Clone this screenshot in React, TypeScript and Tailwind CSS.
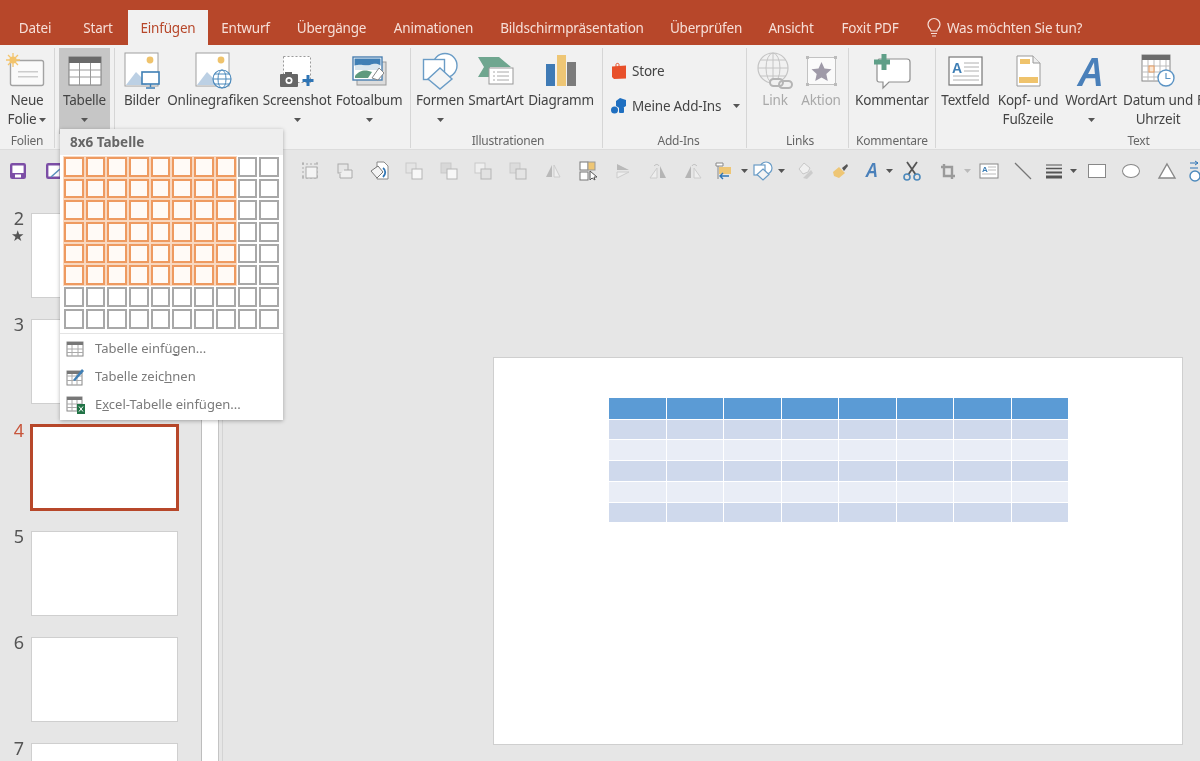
import type { ReactNode } from 'react'

const TABS = [
  { label: 'Datei', w: 'w-[66px]' },
  { label: 'Start', w: 'w-[60px]' },
  { label: 'Einfügen', w: 'w-[80px]', active: true },
  { label: 'Entwurf', w: 'w-[75px]' },
  { label: 'Übergänge', w: 'w-[97px]' },
  { label: 'Animationen', w: 'w-[107px]' },
  { label: 'Bildschirmpräsentation', w: 'w-[170px]' },
  { label: 'Überprüfen', w: 'w-[98px]' },
  { label: 'Ansicht', w: 'w-[72px]' },
  { label: 'Foxit PDF', w: 'w-[86px]' },
]

const Caret = ({ light }: { light?: boolean }) => (
  <svg width="7" height="4" viewBox="0 0 7 4" className="shrink-0">
    <path d="M0 0h7L3.5 4z" fill={light ? '#bbb' : '#555'} />
  </svg>
)

function Icon({ w, h, children }: { w: number; h: number; children: ReactNode }) {
  return (
    <svg width={w} height={h} viewBox={`0 0 ${w} ${h}`} className="shrink-0 overflow-visible">
      {children}
    </svg>
  )
}

/* ---------- ribbon icons ---------- */
const NewSlideIcon = () => (
  <Icon w={38} h={34}>
    <rect x="2.5" y="6.5" width="33" height="25" rx="2" fill="#fafafa" stroke="#a3a3a3" strokeWidth="1.4" />
    <rect x="10" y="17" width="20" height="1.5" fill="#ccc" />
    <rect x="10" y="22" width="20" height="1.5" fill="#ccc" />
    <circle cx="5" cy="6" r="3.6" fill="#f3c46c" />
    <path d="M5 -1v14M-2 6h14M0 1l10 10M10 1L0 11" stroke="#f3c46c" strokeWidth="1.300" />
  </Icon>
)

const TableIcon = () => (
  <Icon w={34} h={30}>
    <rect x="1" y="1" width="32" height="28" fill="#fff" stroke="#7a7a7a" />
    <rect x="1" y="1" width="32" height="6" fill="#6a6a6a" />
    <path d="M1 14h32M1 21h32M11.500 7v22M22.500 7v22" stroke="#9a9a9a" />
  </Icon>
)

const PictureFrame = () => (
  <>
    <rect x="1" y="1" width="33" height="33" fill="#fff" stroke="#a0a0a0" />
    <circle cx="26" cy="8" r="3.400" fill="#efc36c" />
    <path d="M2 33l10-13 8 8 3 5z" fill="#bcd0e4" />
  </>
)

const PicturesIcon = () => (
  <Icon w={36} h={37}>
    <PictureFrame />
    <rect x="18" y="20" width="17" height="12" fill="#fff" stroke="#3f7fb5" strokeWidth="1.6" />
    <path d="M26.500 32v3M22 36h9" stroke="#3f7fb5" strokeWidth="1.400" />
  </Icon>
)

const OnlineIcon = () => (
  <Icon w={37} h={37}>
    <PictureFrame />
    <circle cx="27" cy="27" r="9" fill="#fff" stroke="#4d8abc" strokeWidth="1.200" />
    <ellipse cx="27" cy="27" rx="4" ry="9" fill="none" stroke="#4d8abc" />
    <path d="M18 27h18M19.500 22h15M19.500 32h15" stroke="#4d8abc" />
  </Icon>
)

const ScreenshotIcon = () => (
  <Icon w={34} h={32}>
    <rect x="3.500" y="1.500" width="27" height="26" fill="#fff" stroke="#9a9a9a" strokeDasharray="2 2" />
    <rect x="0" y="19" width="18" height="13" rx="1" fill="#666" />
    <rect x="5" y="17" width="7" height="3" fill="#666" />
    <circle cx="9" cy="25.500" r="3.500" fill="#fff" />
    <circle cx="9" cy="25.500" r="1.800" fill="#666" />
    <path d="M28 20v11M22.500 25.500h11" stroke="#2f75b5" strokeWidth="3" />
  </Icon>
)

const AlbumIcon = () => (
  <Icon w={35} h={30}>
    <rect x="5" y="6" width="29" height="23" fill="#dcdcdc" stroke="#999" />
    <rect x="1" y="1" width="29" height="23" fill="#fff" stroke="#4a7fb0" strokeWidth="1.400" />
    <rect x="2.500" y="2.500" width="26" height="7" fill="#3f7fb5" />
    <path d="M3 10c6-3 10 1 15-1s7-1 10 0v5H3z" fill="#d9e6ee" />
    <path d="M3 20c5-7 12-6 17-4l-4 6H3z" fill="#5f9a7e" />
    <path d="M20 22l7-10 5 5-6 7z" fill="#fff" stroke="#888" />
  </Icon>
)

const ShapesIcon = () => (
  <Icon w={37} h={37}>
    <circle cx="23" cy="13.500" r="12" fill="#fff" stroke="#6a9cc6" strokeWidth="1.400" />
    <rect x="1.500" y="7.500" width="21" height="20" fill="#fff" stroke="#6a9cc6" strokeWidth="1.400" />
    <path d="M18 16l12 11-12 10-12-10z" fill="#f4f4f4" stroke="#6a9cc6" strokeWidth="1.400" />
  </Icon>
)

const SmartArtIcon = () => (
  <Icon w={36} h={29}>
    <path d="M0 1h21l12 10H12v10H0l6-10z" fill="#6fa68f" />
    <rect x="11" y="12" width="24" height="16" fill="#fff" stroke="#999" />
    <path d="M15 16h2M19 16h12M15 20h2M19 20h12M15 24h2M19 24h12" stroke="#aaa" />
  </Icon>
)

const ChartIcon = () => (
  <Icon w={30} h={32}>
    <rect x="0" y="9" width="9" height="22" fill="#3f7ab5" />
    <rect x="11" y="0" width="9" height="31" fill="#eec675" />
    <rect x="21" y="7" width="9" height="24" fill="#7b7b7b" />
  </Icon>
)

const StoreIcon = () => (
  <Icon w={16} h={18}>
    <path d="M5 5V2.500C5 1 8 1 8 2.500V5" fill="none" stroke="#e8502a" strokeWidth="1" />
    <path d="M1 4.500l14-1v13L3 17l-2-2z" fill="#e8502a" />
  </Icon>
)

const AddInsIcon = () => (
  <Icon w={16} h={16}>
    <path d="M9 0l6 2v6l-5 3-5-3V3z" fill="#1f6fc0" />
    <circle cx="3.500" cy="12" r="3.500" fill="#1f6fc0" />
    <rect x="8" y="9" width="5" height="6" rx="1" fill="#1f6fc0" />
  </Icon>
)

const LinkIcon = () => (
  <Icon w={36} h={38}>
    <circle cx="16" cy="16" r="15" fill="none" stroke="#c4c4c4" strokeWidth="1.200" />
    <ellipse cx="16" cy="16" rx="7" ry="15" fill="none" stroke="#c4c4c4" />
    <path d="M1 16h30M3 8h26M3 24h26M16 1v30" stroke="#c4c4c4" />
    <rect x="13" y="27" width="13" height="7" rx="3.500" fill="#f1f1f1" stroke="#b5b5b5" strokeWidth="2" />
    <rect x="22" y="29" width="13" height="7" rx="3.500" fill="none" stroke="#b5b5b5" strokeWidth="2" />
  </Icon>
)

const ActionIcon = () => (
  <Icon w={31} h={30}>
    <rect x="1.500" y="1.500" width="28" height="27" fill="#fafafa" stroke="#c2c2c2" />
    <path d="M0 0h3v3H0zM28 0h3v3h-3zM0 27h3v3H0zM28 27h3v3h-3z" fill="#bbb" />
    <path d="M15.500 6l3 6.500 7 .8-5.200 4.700 1.500 7-6.300-3.600-6.300 3.600 1.500-7-5.200-4.700 7-.8z" fill="#9f9aa8" />
  </Icon>
)

const CommentIcon = () => (
  <Icon w={37} h={34}>
    <path d="M5 5h28a3 3 0 0 1 3 3v17a3 3 0 0 1-3 3H15l-6 6v-6H5a2 2 0 0 1-2-2V8z" fill="#fff" stroke="#8f8f8f" strokeWidth="1.200" />
    <path d="M10 0v16M0 8h16" stroke="#5f9f88" strokeWidth="5" />
  </Icon>
)

const TextBoxIcon = () => (
  <Icon w={35} h={30}>
    <rect x="1" y="1" width="33" height="28" fill="#fff" stroke="#777" strokeWidth="1.200" />
    <text x="4" y="17" fontSize="14" fontWeight="700" fontFamily="Liberation Sans, sans-serif" fill="#3f7fb5">A</text>
    <path d="M16 7h15M16 11h15M16 15h15M5 20h26M5 24h26" stroke="#b0b0b0" />
  </Icon>
)

const HeaderIcon = () => (
  <Icon w={25} h={32}>
    <path d="M1 1h16l7 7v23H1z" fill="#fff" stroke="#999" />
    <path d="M17 1v7h7" fill="#eee" stroke="#999" />
    <rect x="4" y="4" width="10" height="5" fill="#efc36c" />
    <rect x="3" y="22" width="19" height="6" fill="#efc36c" />
  </Icon>
)

const CalendarIcon = () => (
  <Icon w={35} h={33}>
    <rect x="1" y="1" width="28" height="26" fill="#fff" stroke="#888" />
    <rect x="1" y="1" width="28" height="5" fill="#6b6b6b" />
    <path d="M1 12h28M1 18h28M1 23h28M7 6v21M13 6v21M19 6v21M25 6v21" stroke="#bbb" />
    <rect x="8" y="12" width="5" height="6" fill="#fbe7d4" stroke="#e59a5f" />
    <circle cx="25" cy="24" r="8" fill="#fff" stroke="#5a93c4" strokeWidth="1.400" />
    <path d="M25 19v5.500h4.500" fill="none" stroke="#5a93c4" strokeWidth="1.200" />
  </Icon>
)

/* ---------- toolbar icons (20x20) ---------- */
const T = ({ children }: { children: ReactNode }) => <Icon w={20} h={20}>{children}</Icon>

const SaveIcon = () => (
  <T>
    <rect x="3.200" y="3.200" width="13.600" height="13.600" rx="1" fill="#fff" stroke="#7c4ea6" strokeWidth="2.400" />
    <path d="M3 12h14v5H3z" fill="#7c4ea6" />
    <rect x="7" y="13.500" width="6" height="3" fill="#fff" />
  </T>
)
const SaveAsIcon = () => (
  <T>
    <rect x="3.200" y="3.200" width="13.600" height="13.600" rx="1" fill="#fff" stroke="#7c4ea6" strokeWidth="2.400" />
    <path d="M7 16l9-8" stroke="#5a8fbd" strokeWidth="1.500" />
  </T>
)
const GroupIcon = () => (
  <T>
    <path d="M2 2h2M16 2h2M2 16h2M16 16h2M3 2v16M17 2v16M2 3h16M2 17h16" stroke="#aaa" strokeDasharray="2 2" />
    <rect x="6" y="6" width="11" height="11" fill="#f4f4f4" stroke="#aaa" />
  </T>
)
const UngroupIcon = () => (
  <T>
    <rect x="3" y="3" width="10" height="9" fill="none" stroke="#aaa" />
    <path d="M9 9h8v8H5v-4" fill="#f0f0f0" stroke="#aaa" />
  </T>
)
const TagIcon = () => (
  <T>
    <path d="M7 1h7l4 4v13H7z" fill="#fff" stroke="#888" />
    <path d="M1 10l7-5 5 6-6 6z" fill="#f4f4f4" stroke="#777" />
    <path d="M13 7c3 2 3 6 0 9" stroke="#2f75b5" strokeWidth="1.800" fill="none" />
  </T>
)
const Layer = ({ a, b }: { a: string; b: string }) => (
  <T>
    <rect x="2" y="2" width="10" height="10" fill={a} stroke="#c9c9c9" />
    <rect x="8" y="8" width="10" height="10" fill={b} stroke="#b5b5b5" />
  </T>
)
const FlipIcon = ({ flip }: { flip?: boolean }) => (
  <T>
    <g transform={flip ? 'rotate(90 10 10)' : undefined}>
      <path d="M9 4v12H3z" fill="#b9b9b9" />
      <path d="M11 4v12h6z" fill="#eee" stroke="#ccc" />
    </g>
  </T>
)
const RotateIcon = ({ mirror }: { mirror?: boolean }) => (
  <T>
    <g transform={mirror ? 'translate(20 0) scale(-1 1)' : undefined}>
      <path d="M12 5v12h6z" fill="#b5b5b5" />
      <path d="M2 17l7-10v10z" fill="#eee" stroke="#ccc" />
      <path d="M6 5c2-2 4-2 5 0" stroke="#bbb" fill="none" />
    </g>
  </T>
)
const SelectIcon = () => (
  <T>
    <rect x="2" y="1" width="8" height="8" fill="#fff" stroke="#777" />
    <rect x="10" y="1" width="7" height="8" fill="#eec675" stroke="#999" />
    <rect x="2" y="11" width="8" height="8" fill="#fff" stroke="#777" />
    <path d="M12 10v9l2-2 3 2-1-3h3z" fill="#fff" stroke="#555" />
  </T>
)
const ArrangeIcon = () => (
  <T>
    <path d="M3 2h7v3h-7zM5 5v13" fill="#fff" stroke="#888" />
    <rect x="6" y="6" width="12" height="7" fill="#eec675" />
    <path d="M16 15H7M10 12l-3 3 3 3" stroke="#2f75b5" strokeWidth="1.400" fill="none" />
  </T>
)
const SmallShapes = () => (
  <T>
    <circle cx="13" cy="7" r="6" fill="#fff" stroke="#6a9cc6" strokeWidth="1.200" />
    <rect x="1" y="4" width="11" height="10" fill="#fff" stroke="#6a9cc6" strokeWidth="1.200" />
    <path d="M10 8l6 5.500-6 5.500-6-5.500z" fill="#f4f4f4" stroke="#6a9cc6" strokeWidth="1.200" />
  </T>
)
const FadedIcon = () => (
  <T>
    <path d="M4 8l5-6 6 5-2 4-5 2z" fill="#f0f0f0" stroke="#c8c8c8" />
    <path d="M8 17l8-8 2 3-6 6z" fill="#ccc" />
  </T>
)
const BrushIcon = () => (
  <T>
    <path d="M3 11l6-5 6 6-6 5-5-2z" fill="#eec675" />
    <path d="M12 7l5-4 1 2-4 5z" fill="#555" />
  </T>
)
const ScissorsIcon = () => (
  <T>
    <path d="M5 1l9 13M15 1L6 14" stroke="#555" strokeWidth="1.800" />
    <circle cx="5" cy="16" r="3" fill="none" stroke="#4d8abc" strokeWidth="1.600" />
    <circle cx="15" cy="16" r="3" fill="none" stroke="#4d8abc" strokeWidth="1.600" />
  </T>
)
const CropIcon = () => (
  <T>
    <path d="M6 3v12h11M3 6h11v12" fill="none" stroke="#9a9a9a" strokeWidth="2.400" />
  </T>
)
const SmallTextBox = () => (
  <T>
    <rect x="1" y="3" width="18" height="14" fill="#fff" stroke="#888" />
    <text x="3" y="11" fontSize="8" fontWeight="700" fontFamily="Liberation Sans, sans-serif" fill="#3f7fb5">A</text>
    <path d="M9 6h8M9 9h8M3 13h14" stroke="#bbb" />
  </T>
)
const LineIcon = () => (
  <T>
    <path d="M2 2l16 16" stroke="#777" strokeWidth="1.300" />
  </T>
)
const LinesIcon = () => (
  <T>
    <path d="M2 4h16" stroke="#555" />
    <path d="M2 7.500h16" stroke="#555" strokeWidth="1.500" />
    <path d="M2 11.500h16" stroke="#555" strokeWidth="2" />
    <path d="M2 16h16" stroke="#555" strokeWidth="3" />
  </T>
)
const ConnectorIcon = () => (
  <T>
    <path d="M5 2h8M10 0l3 2-3 2M5 7h8" stroke="#2f75b5" fill="none" />
    <circle cx="10" cy="15" r="5" fill="#fff" stroke="#4d8abc" strokeWidth="1.400" />
  </T>
)

const A = ({ big }: { big?: boolean }) => (
  <span
    className={`italic font-semibold text-[#4a80ba] ${big ? 'text-[40px] leading-[38px]' : 'text-[19px] leading-[20px]'}`}
  >
    A
  </span>
)

/* ---------- ribbon parts ---------- */
function RibbonBtn({
  className,
  icon,
  lines,
  caret,
  muted,
}: {
  className: string
  icon: ReactNode
  lines: string[]
  caret?: boolean
  muted?: boolean
}) {
  return (
    <div className={`flex shrink-0 flex-col items-center ${className}`}>
      <div className="flex h-[43px] w-full items-center justify-center pt-[2px]">{icon}</div>
      {lines.map((l) => (
        <div key={l} className={`h-[19px] whitespace-nowrap text-center leading-[19px] ${muted ? 'text-[#a9a9a9]' : ''}`}>
          {l}
        </div>
      ))}
      {caret && (
        <div className="flex h-[19px] items-center">
          <Caret />
        </div>
      )}
    </div>
  )
}

function Group({ className, label, children }: { className: string; label?: string; children: ReactNode }) {
  return (
    <div className={`relative flex h-[100px] shrink-0 flex-col border-r border-[#d6d6d6] ${className}`}>
      <div className="flex h-[86px] overflow-hidden">{children}</div>
      {label && <div className="text-center text-[12px] leading-[14px] text-[#666]">{label}</div>}
    </div>
  )
}

function Ribbon() {
  return (
    <div className="flex h-[105px] overflow-hidden border-b border-[#dcdcdc] bg-[#f1f1f1] pt-[3px] text-[13.500px] tracking-[-0.2px] text-[#444]">
      <Group className="w-[55px]" label="Folien">
        <div className="flex w-full flex-col items-center">
          <div className="flex h-[43px] items-center pt-[2px]">
            <NewSlideIcon />
          </div>
          <div className="h-[19px] leading-[19px]">Neue</div>
          <div className="flex h-[19px] items-center gap-[3px] leading-[19px]">
            Folie <Caret />
          </div>
        </div>
      </Group>
      <Group className="w-[60px] pl-[4px]">
        <RibbonBtn
          className="h-[86px] w-[51px] bg-[#c6c6c6]"
          icon={<TableIcon />}
          lines={['Tabelle']}
          caret
        />
      </Group>
      <Group className="w-[296px] pl-[3px]">
        <RibbonBtn className="w-[48px]" icon={<PicturesIcon />} lines={['Bilder']} />
        <RibbonBtn className="w-[94px]" icon={<OnlineIcon />} lines={['Onlinegrafiken']} />
        <RibbonBtn className="w-[74px]" icon={<ScreenshotIcon />} lines={['Screenshot']} caret />
        <RibbonBtn className="w-[70px]" icon={<AlbumIcon />} lines={['Fotoalbum']} caret />
      </Group>
      <Group className="w-[192px] pl-[3px]" label="Illustrationen">
        <RibbonBtn className="w-[52px]" icon={<ShapesIcon />} lines={['Formen']} caret />
        <RibbonBtn className="w-[60px]" icon={<SmartArtIcon />} lines={['SmartArt']} />
        <RibbonBtn className="w-[70px]" icon={<ChartIcon />} lines={['Diagramm']} />
      </Group>
      <Group className="w-[144px] pl-[8px]" label="Add-Ins">
        <div className="flex flex-col gap-[17px] pt-[14px]">
          <div className="flex h-[18px] items-center gap-[5px]">
            <StoreIcon /> Store
          </div>
          <div className="flex h-[18px] items-center gap-[5px]">
            <AddInsIcon /> Meine Add-Ins <span className="ml-[7px]"><Caret /></span>
          </div>
        </div>
      </Group>
      <Group className="w-[102px] pl-[5px]" label="Links">
        <RibbonBtn className="w-[46px]" icon={<LinkIcon />} lines={['Link']} muted />
        <RibbonBtn className="w-[46px]" icon={<ActionIcon />} lines={['Aktion']} muted />
      </Group>
      <Group className="w-[87px]" label="Kommentare">
        <RibbonBtn className="w-full" icon={<CommentIcon />} lines={['Kommentar']} />
      </Group>
      <div className="relative flex h-[100px] w-[265px] shrink-0 flex-col">
        <div className="flex h-[86px]">
          <RibbonBtn className="w-[59px]" icon={<TextBoxIcon />} lines={['Textfeld']} />
          <RibbonBtn className="w-[66px]" icon={<HeaderIcon />} lines={['Kopf- und', 'Fußzeile']} />
          <RibbonBtn className="w-[60px]" icon={<A big />} lines={['WordArt']} caret />
          <RibbonBtn className="w-[74px]" icon={<CalendarIcon />} lines={['Datum und', 'Uhrzeit']} />
          <div className="pl-[2px] pt-[43px] leading-[19px]">F</div>
        </div>
        <div className="pl-[140px] text-center text-[12px] leading-[14px] text-[#666]">Text</div>
      </div>
    </div>
  )
}

/* ---------- quick access bar ---------- */
function Slot({ className, children }: { className: string; children: ReactNode }) {
  return <div className={`flex shrink-0 items-center ${className}`}>{children}</div>
}

function Toolbar() {
  return (
    <div className="flex h-[41px] items-center overflow-hidden bg-[#e6e6e6] pl-[8px]">
      <Slot className="w-[36px]"><SaveIcon /></Slot>
      <Slot className="w-[256px]"><SaveAsIcon /></Slot>
      <Slot className="w-[35px]"><GroupIcon /></Slot>
      <Slot className="w-[35px]"><UngroupIcon /></Slot>
      <Slot className="w-[34px]"><TagIcon /></Slot>
      <Slot className="w-[35px]"><Layer a="#e4e4e4" b="#f7f7f7" /></Slot>
      <Slot className="w-[34px]"><Layer a="#d8d8d8" b="#f7f7f7" /></Slot>
      <Slot className="w-[35px]"><Layer a="#efefef" b="#e2e2e2" /></Slot>
      <Slot className="w-[35px]"><Layer a="#dcdcdc" b="#e4e4e4" /></Slot>
      <Slot className="w-[35px]"><FlipIcon /></Slot>
      <Slot className="w-[35px]"><SelectIcon /></Slot>
      <Slot className="w-[35px]"><FlipIcon flip /></Slot>
      <Slot className="w-[35px]"><RotateIcon /></Slot>
      <Slot className="w-[30px]"><RotateIcon mirror /></Slot>
      <Slot className="w-[40px] gap-[8px]"><ArrangeIcon /><Caret /></Slot>
      <Slot className="w-[42px] gap-[5px]"><SmallShapes /><Caret /></Slot>
      <Slot className="w-[35px]"><FadedIcon /></Slot>
      <Slot className="w-[32px]"><BrushIcon /></Slot>
      <Slot className="w-[40px] gap-[4px]"><div className="w-[20px] text-center"><A /></div><Caret /></Slot>
      <Slot className="w-[36px]"><ScissorsIcon /></Slot>
      <Slot className="w-[41px] gap-[6px]"><CropIcon /><Caret light /></Slot>
      <Slot className="w-[34px]"><SmallTextBox /></Slot>
      <Slot className="w-[31px]"><LineIcon /></Slot>
      <Slot className="w-[44px] gap-[6px]"><LinesIcon /><Caret /></Slot>
      <Slot className="w-[34px]">
        <div className="h-[14px] w-[18px] border-[1.500px] border-[#888] bg-white" />
      </Slot>
      <Slot className="w-[35px]">
        <div className="h-[14px] w-[18px] rounded-[50%] border-[1.500px] border-[#888] bg-white" />
      </Slot>
      <Slot className="w-[28px]">
        <Icon w={20} h={20}>
          <path d="M10 3l8 14H2z" fill="#fff" stroke="#888" strokeWidth="1.400" />
        </Icon>
      </Slot>
      <Slot className="w-[20px]"><ConnectorIcon /></Slot>
    </div>
  )
}

/* ---------- table popup ---------- */
const GRID_ROWS = [0, 1, 2, 3, 4, 5, 6, 7]
const GRID_COLS = [0, 1, 2, 3, 4, 5, 6, 7, 8, 9]

function MenuItem({ icon, children }: { icon: ReactNode; children: ReactNode }) {
  return (
    <div className="flex h-[28px] items-center">
      <div className="flex w-[35px] pl-[6px]">{icon}</div>
      <div className="text-[13px] text-[#7a7a7a]">{children}</div>
    </div>
  )
}

function TablePopup() {
  return (
    <div className="absolute left-[60px] top-[129px] h-[291px] w-[223px] bg-white shadow-[0_1px_4px_rgba(0,0,0,0.3)]">
      <div className="flex h-[26px] items-center bg-[#eeeeee] pl-[10px] text-[13.500px] font-bold text-[#666]">
        8x6 Tabelle
      </div>
      <div className="grid grid-cols-[repeat(10,19.700px)] gap-[2px] pl-[4px] pt-[2px]">
        {GRID_ROWS.map((r) =>
          GRID_COLS.map((c) => (
            <div
              key={`${r}-${c}`}
              className={
                r < 6 && c < 8
                  ? 'h-[19.700px] border-2 border-[#ee9a60] bg-[#fffaf6] shadow-[0_0_0_1px_#f9d8c0]'
                  : 'h-[19.700px] border-2 border-[#a8a8a8] bg-white'
              }
            />
          )),
        )}
      </div>
      <div className="mt-[4px] h-px bg-[#e4e4e4]" />
      <div className="pt-[1px]">
        <MenuItem
          icon={
            <Icon w={18} h={16}>
              <rect x="1" y="1" width="16" height="14" fill="#fff" stroke="#888" />
              <rect x="1" y="1" width="16" height="3" fill="#777" />
              <path d="M1 8h16M1 11.500h16M6 4v11M12 4v11" stroke="#aaa" />
            </Icon>
          }
        >
          Tabelle einfü<span className="underline">g</span>en...
        </MenuItem>
        <MenuItem
          icon={
            <Icon w={18} h={18}>
              <rect x="1" y="3" width="15" height="14" fill="#fff" stroke="#888" />
              <path d="M1 8h15M1 12.500h15M6 3v14M11 3v14" stroke="#aaa" />
              <rect x="1" y="3" width="15" height="3" fill="#777" />
              <path d="M7 12l9-11 2 2-9 10z" fill="#3f7fb5" />
            </Icon>
          }
        >
          Tabelle zeic<span className="underline">h</span>nen
        </MenuItem>
        <MenuItem
          icon={
            <Icon w={19} h={18}>
              <rect x="1" y="1" width="15" height="14" fill="#fff" stroke="#888" />
              <rect x="1" y="1" width="15" height="3" fill="#777" />
              <path d="M1 8h15M1 11.500h15M6 4v11M11 4v11" stroke="#aaa" />
              <rect x="11" y="8" width="8" height="10" fill="#217346" />
              <path d="M13 10.500l4 5M17 10.500l-4 5" stroke="#fff" />
            </Icon>
          }
        >
          E<span className="underline">x</span>cel-Tabelle einfügen...
        </MenuItem>
      </div>
    </div>
  )
}

/* ---------- slide panel + canvas ---------- */
function Thumb({ n, star, active }: { n: number; star?: boolean; active?: boolean }) {
  return (
    <div className="flex h-[85px] shrink-0">
      <div className={`-mt-[5px] w-[31px] pr-[7px] text-right text-[18px] leading-[20px] ${active ? 'text-[#c8563c]' : 'text-[#555]'}`}>
        {n}
        {star && <div className="text-[15px] leading-[14px] text-[#555]">★</div>}
      </div>
      <div
        className={
          active
            ? '-my-[1px] -ml-[1px] h-[87px] w-[149px] border-[3px] border-[#b7472a] bg-white'
            : 'h-[85px] w-[147px] border border-[#cfcfcf] bg-white'
        }
      />
    </div>
  )
}

const BODY_ROWS = [
  { id: 1, color: 'bg-[#cfd9ec]' },
  { id: 2, color: 'bg-[#e9edf6]' },
  { id: 3, color: 'bg-[#cfd9ec]' },
  { id: 4, color: 'bg-[#e9edf6]' },
  { id: 5, color: 'bg-[#cfd9ec]' },
]
const TABLE_COLS = [0, 1, 2, 3, 4, 5, 6, 7]

function Canvas() {
  return (
    <div className="flex-1 pl-[270px] pt-[166px]">
      <div className="h-[388px] w-[690px] border border-[#cfcfcf] bg-white pl-[115px] pt-[40px]">
        <div className="w-[459px]">
          <div className="grid h-[20.500px] grid-cols-8 gap-px">
            {TABLE_COLS.map((c) => (
              <div key={c} className="bg-[#5b9bd5]" />
            ))}
          </div>
          <div className="mt-[1px] flex flex-col gap-[1px]">
            {BODY_ROWS.map((row) => (
              <div key={row.id} className="grid h-[19.800px] grid-cols-8 gap-px">
                {TABLE_COLS.map((c) => (
                  <div key={c} className={row.color} />
                ))}
              </div>
            ))}
          </div>
        </div>
      </div>
    </div>
  )
}

export default function App() {
  return (
    <div className="relative h-[761px] w-[1200px] overflow-hidden bg-[#e6e6e6] font-['Noto_Sans',sans-serif] blur-[0.4px]">
      {/* Tab bar */}
      <div className="flex h-[45px] items-end bg-[#b7472a] pl-[2px] text-[13.500px] tracking-[-0.2px] text-[#f6dfd8]">
        {TABS.map((t) => (
          <div
            key={t.label}
            className={`flex h-[35px] shrink-0 items-center justify-center pt-[2px] ${t.w} ${
              t.active ? 'bg-[#f1f1f1] text-[#b7472a]' : ''
            }`}
          >
            {t.label}
          </div>
        ))}
        <div className="ml-[14px] flex h-[35px] items-center gap-[6px] pt-[2px]">
          <Icon w={14} h={19}>
            <path d="M4 12c0-2-3-3-3-6.500a6 6 0 0 1 12 0C13 9 10 10 10 12z" fill="none" stroke="#f6dfd8" strokeWidth="1.200" />
            <path d="M4 14.500h6M5 17h4" stroke="#f6dfd8" strokeWidth="1.200" />
          </Icon>
          Was möchten Sie tun?
        </div>
      </div>

      <Ribbon />
      <Toolbar />

      <div className="flex h-[570px]">
        <div className="flex w-[202px] shrink-0 flex-col gap-[21px] overflow-hidden border-r border-[#bdbdbd] pt-[22px]">
          <Thumb n={2} star />
          <Thumb n={3} />
          <Thumb n={4} active />
          <Thumb n={5} />
          <Thumb n={6} />
          <Thumb n={7} />
        </div>
        <div className="w-[17px] shrink-0 border-r border-[#c4c4c4] bg-white" />
        <div className="w-[4px] shrink-0 border-r border-[#d4d4d4]" />
        <Canvas />
      </div>

      <TablePopup />
    </div>
  )
}
